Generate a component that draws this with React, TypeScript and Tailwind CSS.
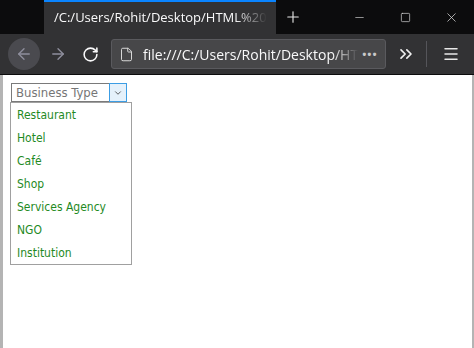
import { Plus, Minus, Square, X, ArrowLeft, ArrowRight, RotateCw, File, ChevronsRight, Menu, ChevronDown } from 'lucide-react'

const options = ['Restaurant', 'Hotel', 'Café', 'Shop', 'Services Agency', 'NGO', 'Institution']

export default function App() {
  return (
    <div className="w-[474px] h-[348px] flex flex-col bg-white overflow-hidden" style={{ fontFamily: '"Open Sans", "Noto Sans", sans-serif' }}>
      {/* tab strip */}
      <div className="h-[34px] flex items-stretch bg-[#0c0c0d] shrink-0">
        <div className="w-[44px]" />
        <div className="w-[232px] bg-[#323234] border-t-2 border-[#0a84ff] flex items-center pl-[10px] pr-[8px] gap-1">
          <span className="flex-1 whitespace-nowrap text-[13px] text-[#f9f9fa] [mask-image:linear-gradient(to_right,black_85%,transparent)]">
            /C:/Users/Rohit/Desktop/HTML%20
          </span>
          <X size={14} strokeWidth={2} className="text-[#f9f9fa]" />
        </div>
        <div className="w-[34px] flex items-center justify-center">
          <Plus size={18} strokeWidth={1.5} className="text-[#e8e8e8]" />
        </div>
        <div className="flex-1" />
        <div className="w-[46px] flex items-center justify-center">
          <Minus size={13} strokeWidth={1.2} className="text-[#d8d8d8]" />
        </div>
        <div className="w-[46px] flex items-center justify-center">
          <Square size={11} strokeWidth={1.5} className="text-[#d8d8d8]" />
        </div>
        <div className="w-[46px] flex items-center justify-center">
          <X size={15} strokeWidth={1.2} className="text-[#d8d8d8]" />
        </div>
      </div>

      {/* toolbar */}
      <div className="h-[41px] bg-[#323234] flex items-center shrink-0 border-b border-[#0c0c0d]">
        <div className="w-[32px] h-[32px] ml-[8px] rounded-full bg-[#4a4a4f] flex items-center justify-center">
          <ArrowLeft size={18} strokeWidth={1.8} className="text-[#8f8f9d]" />
        </div>
        <div className="w-[32px] h-[32px] ml-[2px] flex items-center justify-center">
          <ArrowRight size={18} strokeWidth={1.8} className="text-[#8f8f9d]" />
        </div>
        <div className="w-[32px] h-[32px] flex items-center justify-center">
          <RotateCw size={17} strokeWidth={2.2} className="text-[#f9f9fa]" />
        </div>
        <div className="ml-[5px] w-[275px] h-[30px] rounded-[3px] bg-[#474749] border border-[#5a5a5e] flex items-center pl-[7px] pr-[8px]">
          <File size={15} strokeWidth={1.6} className="text-[#d8d8d8] shrink-0" />
          <span className="ml-[9px] flex-1 whitespace-nowrap text-[14px] text-[#f9f9fa] [mask-image:linear-gradient(to_right,black_88%,transparent)]">
            file:///C:/Users/Rohit/Desktop/HT
          </span>
          <span className="ml-1 text-[#c8c8c8] text-[11px] tracking-[1px] font-bold">•••</span>
        </div>
        <div className="w-[40px] flex items-center justify-center">
          <ChevronsRight size={20} strokeWidth={2} className="text-[#f0f0f0]" />
        </div>
        <div className="w-px h-[26px] bg-[#55555a]" />
        <div className="flex-1 flex items-center justify-center">
          <Menu size={18} strokeWidth={2} className="text-[#e8e8e8]" />
        </div>
      </div>

      {/* page */}
      <div className="flex-1 border-l-[3px] border-r-[2px] border-[#b4b4b4] pl-[8px] pt-[8px]" style={{ fontFamily: '"DejaVu Sans Condensed", "DejaVu Sans", Tahoma, sans-serif' }}>
        <div className="w-[116px] h-[19px] border border-[#7a7a7a] flex items-stretch">
          <span className="flex-1 pl-[4px] text-[13px] leading-[17px] text-[#767676]">Business Type</span>
          <div className="w-[18px] bg-[#e5f1fb] border border-[#3c9de4] -my-px -mr-px flex items-center justify-center">
            <ChevronDown size={10} strokeWidth={2} className="text-[#404040]" />
          </div>
        </div>
        <div className="w-[122px] -ml-[1px] border border-[#a0a0a0] bg-white flex flex-col">
          {options.map(o => (
            <div key={o} className="h-[23px] pl-[6px] flex items-center text-[12px] text-[#1f8a1f]">
              {o}
            </div>
          ))}
        </div>
      </div>
    </div>
  )
}
